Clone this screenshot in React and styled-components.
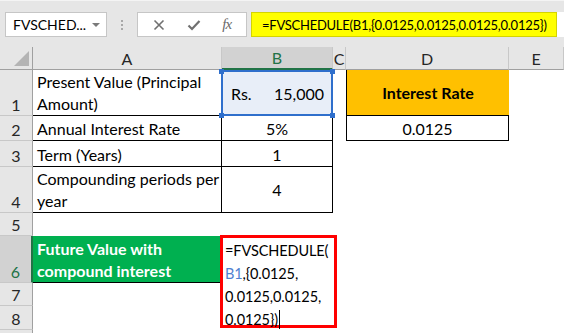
import React from 'react';
import styled, { createGlobalStyle } from 'styled-components';

const Global = createGlobalStyle`
  * { box-sizing: border-box; }
  html, body { margin: 0; padding: 0; background: #fff; overflow: hidden; }
  body { font-family: Lato, "Open Sans", sans-serif; }
`;

const Page = styled.div`
  width: 564px;
  height: 333px;
  overflow: hidden;
  background: #fff;
`;

const Toolbar = styled.div`
  height: 47px;
  background: #e6e6e6;
  border-top: 1px solid #f4f4f4;
  display: flex;
  align-items: flex-start;
  padding: 11px 0 0 5px;
`;

const NameBox = styled.div`
  width: 102px;
  height: 25px;
  background: #fff;
  border: 1px solid #c6c6c6;
  display: flex;
  align-items: center;
  justify-content: space-between;
  padding: 0 6px 0 7px;
  font-size: 14px;
  color: #000;
  white-space: nowrap;
`;

const Caret = styled.span`
  width: 0;
  height: 0;
  border-left: 4px solid transparent;
  border-right: 4px solid transparent;
  border-top: 4px solid #7a7a7a;
`;

const Grip = styled.div`
  width: 30px;
  height: 25px;
  display: flex;
  flex-direction: column;
  align-items: center;
  justify-content: center;
  gap: 2px;
  span {
    width: 2px;
    height: 2px;
    background: #a8a8a8;
  }
`;

const ButtonBox = styled.div`
  width: 110px;
  height: 25px;
  background: #fff;
  border: 1px solid #c6c6c6;
  display: flex;
  align-items: center;
  justify-content: space-around;
  padding: 0 4px;
`;

const Fx = styled.span`
  font-family: "Liberation Serif", serif;
  font-style: italic;
  font-size: 15px;
  color: #6a6a6a;
  letter-spacing: -1px;
`;

const FormulaBar = styled.div`
  flex: 1;
  height: 25px;
  margin-left: 4px;
  background: #fff;
  display: flex;
`;

const Highlight = styled.div`
  width: 306px;
  height: 25px;
  background: #ffff00;
  border: 1px solid #d4d400;
  font-size: 13px;
  letter-spacing: -0.25px;
  color: #000;
  display: flex;
  align-items: center;
  padding-left: 10px;
  white-space: nowrap;
  overflow: hidden;
`;

const Sheet = styled.div`
  display: grid;
  grid-template-columns: 33px 189px 111px 13px 163px 55px;
  grid-template-rows: 23px 46px 25px 26px 46px 23px 47px 23px 24px 10px;
  font-size: 16px;
  color: #000;
`;

const Corner = styled.div`
  background: #e6e6e6;
  border-right: 1px solid #a0a0a0;
  border-bottom: 1px solid #a0a0a0;
  position: relative;
  &::after {
    content: '';
    position: absolute;
    right: 3px;
    bottom: 3px;
    width: 15px;
    height: 15px;
    background: #b4b4b4;
    clip-path: polygon(100% 0, 100% 100%, 0 100%);
  }
`;

const ColHead = styled.div`
  background: ${p => (p.$active ? '#d2d2d2' : '#e6e6e6')};
  color: ${p => (p.$active ? '#217346' : '#262626')};
  border-right: 1px solid #c8c8c8;
  border-bottom: ${p => (p.$active ? '2px solid #217346' : '1px solid #a0a0a0')};
  display: flex;
  align-items: center;
  justify-content: center;
  font-size: 16px;
`;

const RowHead = styled.div`
  grid-column: 1;
  grid-row: ${p => p.$row};
  background: ${p => (p.$active ? '#d2d2d2' : '#e6e6e6')};
  color: ${p => (p.$active ? '#217346' : '#262626')};
  border-right: ${p => (p.$active ? '2px solid #217346' : '1px solid #a0a0a0')};
  border-bottom: 1px solid #c8c8c8;
  display: flex;
  align-items: flex-end;
  justify-content: center;
  padding-bottom: 1px;
  font-size: 16px;
  overflow: hidden;
`;

const Cell = styled.div`
  grid-column: ${p => p.$col};
  grid-row: ${p => p.$row};
  background: ${p => p.$bg || 'transparent'};
  color: ${p => p.$color || '#000'};
  font-weight: ${p => (p.$bold ? 700 : 400)};
  display: flex;
  flex-direction: column;
  justify-content: ${p => p.$valign || 'flex-end'};
  text-align: ${p => p.$align || 'left'};
  padding: 0 4px 0;
  line-height: 22px;
  white-space: nowrap;
  border-right: ${p => (p.$br ? '1px solid #000' : 'none')};
  border-bottom: ${p => (p.$bb ? '1px solid #000' : 'none')};
  border-left: ${p => (p.$bl ? '1px solid #000' : 'none')};
`;

const SelectedCell = styled.div`
  grid-column: 3;
  grid-row: 2;
  position: relative;
  background: #e8eef8;
  border: 2px solid #2f6fcc;
  margin-left: -1px;
  display: flex;
  align-items: center;
  justify-content: space-between;
  padding: 0 7px 0 8px;
`;

const Handle = styled.span`
  position: absolute;
  width: 5px;
  height: 5px;
  background: #2f6fcc;
  ${p => (p.$top ? 'top: -3px;' : 'bottom: -4px;')}
  ${p => (p.$left ? 'left: -4px;' : 'right: -4px;')}
`;

const EditCell = styled.div`
  grid-column: 3;
  grid-row: 7 / span 3;
  margin: -1px -4px 2px -2px;
  background: #fff;
  border: 3px solid #ff0000;
  padding: 1px 0 0 2px;
  line-height: 23px;
  font-size: 14.5px;
  letter-spacing: -0.1px;
`;

const Line = styled.div`
  white-space: nowrap;
`;

const Ref = styled.span`
  color: #4f81d0;
`;

const Cursor = styled.span`
  display: inline-block;
  width: 1px;
  height: 19px;
  background: #000;
  vertical-align: -4px;
  margin-left: 1px;
`;

const cols = ['A', 'B', 'C', 'D', 'E'];
const rows = [1, 2, 3, 4, 5, 6, 7, 8];

export default function App() {
  return (
    <Page>
      <Global />
      <Toolbar>
        <NameBox>
          <span>FVSCHED...</span>
          <Caret />
        </NameBox>
        <Grip>
          <span />
          <span />
          <span />
        </Grip>
        <ButtonBox>
          <svg width="12" height="12" viewBox="0 0 12 12">
            <path d="M1.5 1.5 L10.5 10.5 M10.5 1.5 L1.5 10.5" stroke="#707070" strokeWidth="1.6" fill="none" />
          </svg>
          <svg width="14" height="12" viewBox="0 0 14 12">
            <path d="M1.5 6.5 L5 10 L12.5 2" stroke="#707070" strokeWidth="2.2" fill="none" />
          </svg>
          <Fx>fx</Fx>
        </ButtonBox>
        <FormulaBar>
          <Highlight>=FVSCHEDULE(B1,{'{'}0.0125,0.0125,0.0125,0.0125{'}'})</Highlight>
        </FormulaBar>
      </Toolbar>
      <Sheet>
        <Corner />
        {cols.map(c => (
          <ColHead key={c} $active={c === 'B'}>{c}</ColHead>
        ))}
        {rows.map(r => (
          <RowHead key={r} $row={r + 1} $active={r === 6}>
            {r}
          </RowHead>
        ))}
        <RowHead $row={10} />

        <Cell $col={2} $row={2} $bb>
          <div>Present Value (Principal</div>
          <div>Amount)</div>
        </Cell>
        <SelectedCell>
          <span>Rs.</span>
          <span>15,000</span>
          <Handle $top $left />
          <Handle $top />
          <Handle $left />
          <Handle />
        </SelectedCell>
        <Cell $col={5} $row={2} $bg="#ffc000" $bold $align="center" $valign="center" $bb $bl>
          Interest Rate
        </Cell>

        <Cell $col={2} $row={3} $br $bb>Annual Interest Rate</Cell>
        <Cell $col={3} $row={3} $br $bb $align="center">5%</Cell>
        <Cell $col={5} $row={3} $br $bb $bl $align="center">0.0125</Cell>

        <Cell $col={2} $row={4} $br $bb>Term (Years)</Cell>
        <Cell $col={3} $row={4} $br $bb $align="center">1</Cell>

        <Cell $col={2} $row={5} $br $bb>
          <div>Compounding periods per</div>
          <div>year</div>
        </Cell>
        <Cell $col={3} $row={5} $br $bb $align="center" $valign="center">4</Cell>

        <Cell $col={2} $row={7} $bg="#00b050" $color="#fff" $bold $bb>
          <div>Future Value with</div>
          <div>compound interest</div>
        </Cell>
        <EditCell>
          <Line>=FVSCHEDULE(</Line>
          <Line><Ref>B1</Ref>,{'{'}0.0125,</Line>
          <Line>0.0125,0.0125,</Line>
          <Line>0.0125{'}'})<Cursor /></Line>
        </EditCell>
      </Sheet>
    </Page>
  );
}
